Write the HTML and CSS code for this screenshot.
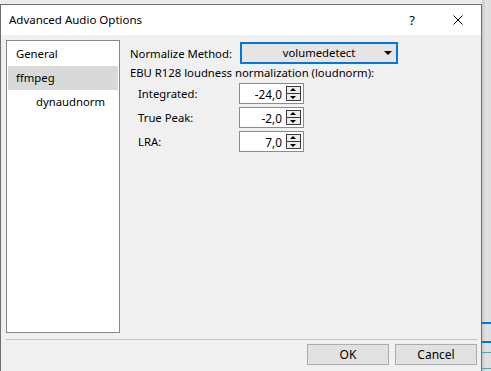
FILE: index.html
```html
<!DOCTYPE html>
<html>
<head>
<meta charset="utf-8">
<link rel="stylesheet" href="styles.css">
</head>
<body>
<div class="desktop">
  <div class="window">
    <div class="titlebar">
      <span class="title">Advanced Audio Options</span>
      <span class="help">?</span>
      <span class="close"><svg width="10" height="10" viewBox="0 0 10 10"><path d="M0.5 0.5 L9.5 9.5 M9.5 0.5 L0.5 9.5" stroke="#000" stroke-width="1" fill="none"/></svg></span>
    </div>
    <div class="client">
      <div class="main">
        <ul class="tree">
          <li class="item">General</li>
          <li class="item selected">ffmpeg</li>
          <li class="item child">dynaudnorm</li>
        </ul>
        <div class="panel">
          <div class="row-method">
            <span class="method-label">Normalize Method:</span>
            <div class="combo"><span class="combo-text">volumedetect</span><span class="combo-arrow"></span></div>
          </div>
          <div class="group-label">EBU R128 loudness normalization (loudnorm):</div>
          <div class="field">
            <span class="field-label">Integrated:</span>
            <div class="spin"><span class="spin-val">-24,0</span><span class="spin-btns"><span class="spin-up"></span><span class="spin-down"></span></span></div>
          </div>
          <div class="field">
            <span class="field-label">True Peak:</span>
            <div class="spin"><span class="spin-val">-2,0</span><span class="spin-btns"><span class="spin-up"></span><span class="spin-down"></span></span></div>
          </div>
          <div class="field">
            <span class="field-label">LRA:</span>
            <div class="spin"><span class="spin-val">7,0</span><span class="spin-btns"><span class="spin-up"></span><span class="spin-down"></span></span></div>
          </div>
        </div>
      </div>
      <div class="sep"></div>
      <div class="buttons">
        <button class="btn">OK</button>
        <button class="btn">Cancel</button>
      </div>
    </div>
  </div>
  <div class="behind">
    <div class="bline blue b1"></div>
    <div class="bline blue b2"></div>
    <div class="bline teal b3"></div>
    <div class="bline teal b4"></div>
  </div>
</div>
</body>
</html>
```
FILE: styles.css
```css
html, body {
  margin: 0;
  padding: 0;
}
body {
  width: 491px;
  height: 371px;
  overflow: hidden;
  background: #ececec;
  font-family: "Segoe UI", "Noto Sans", "Open Sans", sans-serif;
  font-size: 11.3px;
  color: #000;
}
.desktop {
  display: flex;
  padding-top: 4px;
  height: 367px;
}
.window {
  width: 480px;
  height: 370px;
  border: 1px solid #6f6f6f;
  border-bottom: none;
  background: #f0f0f0;
  display: flex;
  flex-direction: column;
  flex: none;
}
.titlebar {
  height: 30px;
  background: #fff;
  display: flex;
  align-items: center;
  flex: none;
}
.title {
  margin-left: 8px;
  flex: 1;
  line-height: 16px;
  font-size: 11.5px;
}
.help {
  width: 12px;
  text-align: center;
  margin-right: 35px;
  font-size: 13px;
}
.close {
  display: flex;
  width: 10px;
  height: 10px;
  margin-right: 18px;
}
.client {
  padding: 5px 4px 0 5px;
  display: flex;
  flex-direction: column;
}
.main {
  display: flex;
  height: 293px;
}
.tree {
  list-style: none;
  margin: 0;
  padding: 1px;
  width: 110px;
  height: 289px;
  border: 1px solid #828790;
  background: #fff;
  flex: none;
}
.item {
  height: 24px;
  line-height: 24px;
  padding-left: 8px;
}
.item.selected {
  background: #d9d9d9;
}
.item.child {
  padding-left: 28px;
}
.panel {
  margin-left: 10px;
  padding-top: 2px;
  display: flex;
  flex-direction: column;
}
.row-method {
  display: flex;
  align-items: center;
  height: 22px;
}
.method-label {
  width: 110px;
}
.combo {
  box-sizing: border-box;
  width: 158px;
  height: 22px;
  border: 2px solid #0078d7;
  background: #e5e5e5;
  position: relative;
  display: flex;
  align-items: center;
  justify-content: center;
}
.combo-text {
  line-height: 16px;
}
.combo-arrow {
  position: absolute;
  right: 4px;
  top: 7px;
  width: 0;
  height: 0;
  border-left: 4px solid transparent;
  border-right: 4px solid transparent;
  border-top: 4px solid #000;
}
.group-label {
  margin-top: 1px;
  height: 16px;
  line-height: 16px;
}
.field {
  display: flex;
  align-items: center;
  margin-top: 2px;
  height: 21px;
  margin-bottom: 1px;
  padding-left: 8px;
}
.field-label {
  width: 101px;
}
.spin {
  box-sizing: border-box;
  width: 65px;
  height: 21px;
  border: 1px solid #5f9ea0;
  background: #fff;
  display: flex;
  align-items: center;
}
.spin-val {
  flex: 1;
  text-align: right;
  padding-right: 4px;
  line-height: 16px;
  font-size: 11.8px;
}
.spin-btns {
  display: flex;
  flex-direction: column;
  margin-right: 2px;
}
.spin-up, .spin-down {
  box-sizing: border-box;
  width: 15px;
  height: 8px;
  border: 1px solid #3c3c3c;
  background: #ececec;
  position: relative;
}
.spin-down {
  margin-top: -1px;
}
.spin-up::after, .spin-down::after {
  content: "";
  position: absolute;
  left: 3px;
  width: 0;
  height: 0;
  border-left: 3.5px solid transparent;
  border-right: 3.5px solid transparent;
}
.spin-up::after {
  top: 1px;
  border-bottom: 3px solid #000;
}
.spin-down::after {
  top: 2px;
  border-top: 3px solid #000;
}
.sep {
  margin-top: 6px;
  height: 1px;
  background: #c4c4c4;
  width: 471px;
}
.buttons {
  display: flex;
  justify-content: flex-end;
  gap: 6px;
  margin-top: 4px;
  width: 471px;
}
.btn {
  box-sizing: border-box;
  width: 82px;
  height: 21px;
  border: 1px solid #adadad;
  background: #e1e1e1;
  font-family: inherit;
  font-size: 12px;
  color: #000;
  padding: 0;
  margin: 0;
}
.behind {
  flex: 1;
  background: linear-gradient(to right, #c8c8c8, #e2e2e2 4px, #dedede);
  margin-top: -4px;
  position: relative;
}
.bline {
  position: absolute;
  left: 0;
  right: 0;
}
.blue { height: 2px; background: #0078d7; }
.teal { height: 1px; background: #5f9ea0; }
.b1 { top: 322px; }
.b2 { top: 341px; }
.b3 { top: 352px; }
.b4 { top: 368px; }
```
